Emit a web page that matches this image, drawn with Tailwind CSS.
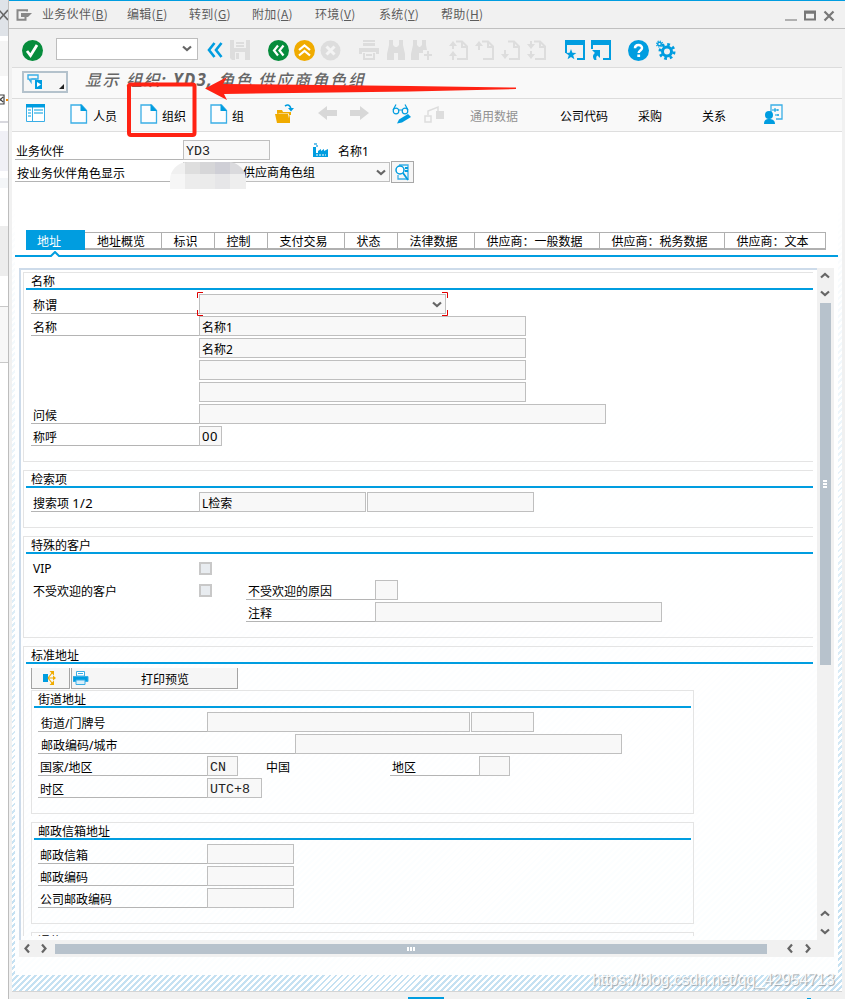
<!DOCTYPE html>
<html lang="zh-CN">
<head>
  <meta charset="UTF-8">
  <meta name="viewport" content="width=device-width, initial-scale=1.0">
  <title>显示 组织: YD3</title>
  <script src="https://cdn.jsdelivr.net/npm/@tailwindcss/browser@4"></script>
  <style>
    body { font-family: 'Noto Sans', 'Noto Sans CJK SC', sans-serif; }
    .cjk { font-family: 'Noto Sans CJK SC', sans-serif; }
    .mono { font-family: 'Liberation Mono', monospace; color: #222; }
    .hatch { background: linear-gradient(#fff 8%, #ffffff00 90%), repeating-linear-gradient(135deg, #c5e1f2 0 2px, #fff 2px 4.25px); }
    .lbl { border-bottom: 1px solid #b4b4b4; height: 20px; line-height: 23px; padding-left: 2px; flex-shrink: 0; }
    .fld { border: 1px solid #bfbfbf; background: #f8f8f8; height: 20px; line-height: 21px; padding-left: 2px; flex-shrink: 0; }
    svg { flex-shrink: 0; }
  </style>
</head>
<body class="relative w-[845px] h-[999px] overflow-hidden flex bg-[#f1f1f1] text-black text-xs whitespace-nowrap">

<svg class="hidden">
  <symbol id="doc" viewBox="0 0 18 20"><path d="M1 1h10.500L16.500 6.500V19H1z" fill="#fcfdfe" stroke="#3aaee6" stroke-width="1.300"/><path d="M10.500 0 17 7h-6.500z" fill="#009de0"/></symbol>
  <symbol id="down" viewBox="0 0 10 7"><path d="M1 1.500 5 5l4-3.500" fill="none" stroke="#666" stroke-width="2.200"/></symbol>
  <symbol id="page" viewBox="0 0 20 20"><path d="M7 1.500h6l5 5V19H8M13 2v5h5" fill="none" stroke="#ddd" stroke-width="2"/></symbol>
</svg>

<!-- window behind -->
<aside class="w-2 shrink-0 h-full overflow-hidden flex flex-col bg-white">
  <div class="h-9 bg-[#dfe3e8] pt-[9px]"><svg width="8" height="12" viewBox="0 0 8 12"><path d="M-1 1 8 11M8 1-1 11" stroke="#666" stroke-width="1.600"/></svg></div>
  <div class="h-[5px] bg-white"></div>
  <div class="h-[35px] bg-[#f5f5f5]"></div>
  <div class="h-[47px] border-b-2 border-[#d8d8de] pt-[17px]"><svg width="8" height="14" viewBox="0 0 8 14"><path d="M-3 2h7v9h-7M-2 4l5 5M3 4l-5 5" fill="none" stroke="#444" stroke-width="1.200"/><path d="M6 7h2" stroke="#f08a00" stroke-width="2"/></svg></div>
  <div class="h-[8px]"></div>
  <div class="h-10 bg-[#f0f0f6]"></div>
  <div class="h-[7px]"></div>
  <div class="h-[10px] bg-[#f4f6f8]"></div>
  <div class="h-[38px]"></div>
  <div class="h-[50px] bg-[#ededed]"></div>
  <div class="h-[30px]"></div>
  <div class="h-[57px] bg-[#f7f7f7] border-y border-[#c8c8c8]"></div>
</aside>

<div class="flex-1 min-w-0 h-full flex flex-col border-l border-[#bdbdbd] border-t-0">
  <div class="h-px bg-[#009de0]"></div>

  <!-- menu bar -->
  <header class="cjk h-7 flex items-center border-b border-[#c0c0c0] text-[#5c5c5c] pl-[7px] shrink-0">
    <svg width="16" height="12" viewBox="0 0 16 12"><path d="M11 2.500V1.200H1.500v9.600h8V8" fill="none" stroke="#888" stroke-width="2"/><path d="M5 4h11l-4 4H5z" fill="#888"/></svg>
    <nav class="flex pl-[10px] pb-[2px] tracking-[.3px]">
      <span class="w-[85px]">业务伙伴(<u>B</u>)</span>
      <span class="w-[62px]">编辑(<u>E</u>)</span>
      <span class="w-[63px]">转到(<u>G</u>)</span>
      <span class="w-[63px]">附加(<u>A</u>)</span>
      <span class="w-16">环境(<u>V</u>)</span>
      <span class="w-[62px]">系统(<u>Y</u>)</span>
      <span>帮助(<u>H</u>)</span>
    </nav>
    <svg class="ml-auto mr-[10px] mt-[2px]" width="50" height="13" viewBox="0 0 50 13"><path d="M0 11h12" stroke="#b0b0b0" stroke-width="2"/><path d="M20 3.500h10v7H20z" fill="none" stroke="#777" stroke-width="2"/><path d="M19 3h12" stroke="#777" stroke-width="3"/><path d="m39.500 2.500 9 9m0-9-9 9" stroke="#777" stroke-width="2.200"/></svg>
  </header>

  <!-- system toolbar -->
  <div class="h-[38px] shrink-0 flex items-center pl-[13px] pt-[7px] pb-[3px]">
    <svg width="21" height="21" viewBox="0 0 21 21"><circle cx="10.500" cy="10.500" r="10.500" fill="#068c3c"/><path d="m5 11 3.500 4.500L15 5" fill="none" stroke="#fff" stroke-width="2.800"/></svg>
    <div class="ml-[13px] mb-[3px] w-[142px] h-[22px] bg-white border border-[#bdbdbd] flex items-center justify-end pr-[5px]"><svg width="10" height="7"><use href="#down"/></svg></div>
    <svg class="ml-[9px]" width="16" height="16" viewBox="0 0 16 16"><path d="M7.500 1 2 8l5.500 7M14.500 1 9 8l5.500 7" fill="none" stroke="#009de0" stroke-width="2.600"/></svg>
    <svg class="ml-[7px]" width="20" height="20" viewBox="0 0 20 20"><path d="M0 0h20v20H2l-2-2z" fill="#ddd"/><path d="M4 0h12v8H4zM5 12h10v8H5z" fill="#f1f1f1"/><path d="M6 2h8v2H6zm0 3h8v2H6zM6 13h3v6H6z" fill="#ddd"/></svg>
    <svg class="ml-[18px]" width="21" height="21" viewBox="0 0 21 21"><circle cx="10.500" cy="10.500" r="10.500" fill="#068c3c"/><path d="m10 5.500-4 5 4 5m5.500-10-4 5 4 5" fill="none" stroke="#fff" stroke-width="2.200"/></svg>
    <svg class="ml-[5px]" width="21" height="21" viewBox="0 0 21 21"><circle cx="10.500" cy="10.500" r="10.500" fill="#f0ab00"/><path d="m5 10 5.500-4.500L16 10M5 15.500l5.500-4.500 5.500 4.500" fill="none" stroke="#fff" stroke-width="2.200"/></svg>
    <svg class="ml-[5px]" width="21" height="21" viewBox="0 0 21 21"><circle cx="10.500" cy="10.500" r="10" fill="#ddd"/><path d="m6.500 6.500 8 8m0-8-8 8" stroke="#f4f4f4" stroke-width="3"/></svg>
    <svg class="ml-[18px]" width="20" height="20" viewBox="0 0 20 20"><path d="M4 0h12v2H4zm0 3h12v3H4zM0 8h20v6h-3v-2H3v2H0zm4 5h2v5h8v-5h2v7H4zm3 1h6v2H7z" fill="#ddd"/></svg>
    <svg class="ml-[7px]" width="20" height="20" viewBox="0 0 20 20"><path d="M3 0h4v5l2 2h2l2-2V0h4v5l2 9v6h-7v-7H8v7H1v-6l2-9z" fill="#ddd"/></svg>
    <svg class="ml-[5px]" width="21" height="20" viewBox="0 0 21 20"><path d="M2 0h4v5l2 2h1l2-2V0h4v5l1 5h-4v3H8v7H0v-6l2-9zM16 11h2v3h3v2h-3v4h-2v-4h-3v-2h3z" fill="#ddd"/></svg>
    <svg class="ml-[17px]" width="20" height="20"><use href="#page"/><path d="M0 6 4 1l4 5H5v3H3V6zM0 16l4-5 4 5H5v4H3v-4z" fill="#ddd"/></svg>
    <svg class="ml-[6px]" width="20" height="20"><use href="#page"/><path d="M0 6 4 1l4 5H5v4H3V6z" fill="#ddd"/></svg>
    <svg class="ml-[6px]" width="20" height="20"><use href="#page"/><path d="m0 14 4 5 4-5H5v-4H3v4z" fill="#ddd"/></svg>
    <svg class="ml-[6px]" width="20" height="20"><use href="#page"/><path d="m0 4 4 5 4-5H5V1H3v3zM0 14l4 5 4-5H5v-3H3v3z" fill="#ddd"/></svg>
    <svg class="ml-[18px]" width="20" height="20" viewBox="0 0 20 20"><path d="M0 0h20v20h-8v-2h6V5H2v8H0z" fill="#009de0"/><path d="m6 9 1.400 3.800 4 .1-3.200 2.400 1.200 4L6 17l-3.400 2.300 1.200-4L.6 12.900l4-.1z" fill="#009de0"/></svg>
    <svg class="ml-[6px]" width="20" height="20" viewBox="0 0 20 20"><path d="M0 0h20v20h-8v-2h6V5H2v4H0z" fill="#009de0"/><path d="M1 10h8v8l-2.500-2.500C5 16 5 18 5.500 20H3.500C1 17 2 14.500 4 13z" fill="#009de0"/></svg>
    <svg class="ml-[17px]" width="21" height="21" viewBox="0 0 21 21"><circle cx="10.500" cy="10.500" r="10.500" fill="#009de0"/><path d="M7 8.300C7 4 14 4 14 8c0 2.500-3.300 2.500-3.300 5" fill="none" stroke="#fff" stroke-width="2.500"/><path d="M9.300 14.500h2.800V17H9.300z" fill="#fff"/></svg>
    <svg class="ml-[7px]" width="21" height="21" viewBox="0 0 21 21" fill="none" stroke="#009de0"><circle cx="11" cy="11.500" r="4.500" stroke-width="3"/><circle cx="11" cy="11.500" r="7" stroke-width="3" stroke-dasharray="2.700 2.798"/><circle cx="3.500" cy="4" r="1.800" stroke-width="1.400"/><circle cx="3.500" cy="4" r="3" stroke-width="1.200" stroke-dasharray="1.150 1.206"/></svg>
  </div>

  <div class="ml-[3px] mr-[3px] h-[925px] shrink-0 flex flex-col border-b border-[#d4d4d4]">
    <!-- title -->
    <div class="h-8 shrink-0 bg-[#f9f9f9] border-y border-[#dcdcdc] flex items-start pl-[10px] pt-[2px]">
      <div class="mt-px w-[46px] h-[22px] border-2 border-[#b4c2cc] bg-[#f6f6f6] flex items-end justify-between pl-[3px] pr-[2px] pb-[2px]">
        <svg width="16" height="15" viewBox="0 0 16 15"><path d="M1 1h10v4H4v3L2 5H1z" fill="none" stroke="#3aaee6" stroke-width="1.400"/><path d="M5 5h4v4" fill="none" stroke="#3aaee6"/><path d="M8 6h7v9H8z" fill="#009de0"/><path d="m10 8 4 2.500-4 2.500z" fill="#fff"/></svg>
        <svg width="5" height="5"><path d="M5 0v5H0z" fill="#222"/></svg>
      </div>
      <h1 class="ml-[17px] -mt-px text-base leading-[22px] font-medium italic text-[#666] flex"><span class="w-[41px] tracking-[1.500px]">显示</span><span class="w-[47px] tracking-[1.500px]">组织<b>:</b></span><b class="w-[45px] text-[17px] tracking-[1.200px]">YD3,</b><span class="w-[40px] tracking-[1.500px]">角色</span><span class="tracking-[2px]">供应商角色组</span></h1>
    </div>

    <!-- application toolbar -->
    <div class="cjk h-8 shrink-0 bg-[#f9f9f9] flex items-center pl-[14px] pb-[2px]">
      <svg class="mb-0.5" width="19" height="18" viewBox="0 0 19 18"><path d="M.5.500h18v17H.5zM6.500 3v14" fill="#fff" stroke="#3aaee6"/><path d="M0 0h19v3.500H0z" fill="#009de0"/><path d="M2 6h3M2 9h3m-3 3h3M8 6h9M8 9h9" stroke="#009de0" stroke-width="1.200"/></svg>
      <svg class="ml-[25px]" width="18" height="20"><use href="#doc"/></svg>
      <span class="ml-[5px] mt-[3px] w-[47px]">人员</span>
      <svg width="18" height="20"><use href="#doc"/></svg>
      <span class="ml-[4px] mt-[3px] w-12">组织</span>
      <svg width="18" height="20"><use href="#doc"/></svg>
      <span class="ml-[4px] mt-[3px] w-[43px]">组</span>
      <svg width="19" height="20" viewBox="0 0 19 20"><path d="M2 9V6h5l1 2h8v3h-2V9.500H3.500v4z" fill="#f0ab00"/><path d="M0 10h13l2 9H2z" fill="#f0ab00"/><path d="M15 9v10h-2z" fill="#f0ab00"/><path d="M10 2c3-2 5-1 6 3" fill="none" stroke="#009de0" stroke-width="1.600"/><path d="M13 4h6l-3 3.500z" fill="#009de0"/></svg>
      <svg class="ml-[24px] mb-0.5" width="19" height="16" viewBox="0 0 19 16"><path d="M0 8 9 1v4h10v6H9v4z" fill="#d8d8d8"/></svg>
      <svg class="ml-[13px] mb-0.5" width="19" height="16" viewBox="0 0 19 16"><path d="m19 8-9-7v4H0v6h10v4z" fill="#d8d8d8"/></svg>
      <svg class="ml-[23px]" width="20" height="20" viewBox="0 0 20 20"><path d="m1 6 3-5.500M13 .5 16 6M7 6h4" stroke="#009de0" stroke-width="1.200"/><circle cx="4" cy="7" r="2.800" fill="none" stroke="#009de0" stroke-width="1.200"/><circle cx="13" cy="7" r="2.800" fill="none" stroke="#009de0" stroke-width="1.200"/><path d="m16 10 3 3-9 5.500-5 1 2-4z" fill="#009de0"/></svg>
      <svg class="ml-[12px]" width="20" height="18" viewBox="0 0 20 18"><path d="M1 11h6v6H1zM4 10V6l10-4v4" fill="none" stroke="#ddd" stroke-width="1.500"/><path d="M12 6h8v8h-8z" fill="#ddd"/></svg>
      <span class="ml-[26px] mt-[3px] w-[90px] text-[#919191]">通用数据</span>
      <span class="mt-[3px] w-[78px]">公司代码</span>
      <span class="mt-[3px] w-16">采购</span>
      <span class="mt-[3px] w-[62px]">关系</span>
      <svg width="19" height="20" viewBox="0 0 19 20"><path d="M7 8V1h11v14h-6" fill="none" stroke="#3aaee6" stroke-width="1.300"/><path d="M8 6h6m-3-2v4M14 5v2m0 3v2m-3-1h4" stroke="#009de0"/><circle cx="5" cy="11" r="4" fill="#009de0"/><path d="M0 20c0-4 2-5 5-5s6 1 6 5z" fill="#009de0"/></svg>
    </div>

    <!-- content -->
    <main class="hatch flex-1 min-h-0 border-t border-[#dedede] pl-[3px] pr-1 pb-4">
      <div class="h-[843px] bg-white/95 flex flex-col">
        <div class="flex mt-[8px] h-5 shrink-0">
          <div class="lbl w-[168px] -indent-px">业务伙伴</div>
          <div class="fld mono w-[87px] text-[13.3px]">YD3</div>
          <svg class="ml-[43px] mt-[3px]" width="16" height="15" viewBox="0 0 16 15"><path d="M0 14V4h3v6h2V8l3-2v2l3-2v2l4-2v8z" fill="#009de0"/><path d="M1 1h3M3 3h2" stroke="#3aaee6" stroke-width="1.500"/><path d="M3 12h10" stroke="#fff" stroke-dasharray="2 1"/></svg>
          <span class="ml-[9px] leading-[23px]">名称1</span>
        </div>
        <div class="flex mt-[1px] h-[22px] relative">
          <div class="lbl mt-px w-[168px]">按业务伙伴角色显示</div>
          <div class="fld mt-px w-[207px] flex justify-between items-center bg-white"><span class="pl-[57px] pt-px leading-[18px]">供应商角色组</span><svg class="mr-[3px]" width="10" height="7"><use href="#down"/></svg></div>
          <div class="ml-px w-[23px] h-[22px] border border-[#a8a8a8] bg-[#f6f6f6] pl-[3px] pt-[2px]"><svg width="15" height="17" viewBox="0 0 15 17"><path d="M4 1h9v14H3v-4" fill="none" stroke="#3aaee6" stroke-width="1.300"/><circle cx="5" cy="6" r="4" fill="#fff" stroke="#009de0" stroke-width="1.500"/><path d="m8 9 5 7M10 4h3m-3 3h3" stroke="#009de0" stroke-width="1.800"/></svg></div>
          <!-- masked text -->
          <div class="absolute left-[155px] top-[1px] w-[76px] h-[27px] rounded-t-[18px] overflow-hidden grid grid-cols-[15px_15px_15px_15px_16px] grid-rows-[12px_15px]">
            <i class="bg-[#f0f0f0]"></i><i class="bg-[#dedede]"></i><i class="bg-[#d6d6d8]"></i><i class="bg-[#cfcfd6]"></i><i class="bg-[#dadadd]"></i>
            <i class="bg-[#f6f6f6]"></i><i class="bg-[#ececec]"></i><i class="bg-[#ebebeb]"></i><i class="bg-[#e6e6e8]"></i><i class="bg-[#eeeeee]"></i>
          </div>
        </div>

        <!-- tabs -->
        <div class="relative mt-[47px] h-[27px] flex items-end pl-[11px] pb-[5px] border-b-2 border-[#009de0] leading-[17px] text-center shrink-0">
          <div class="w-[59px] h-5 bg-[#009de0] text-white pr-[13px] pt-[3px]">地址</div>
          <div class="w-[77px] h-[18px] border-t border-b-2 border-r border-[#b0b0b0] pr-1">地址概览</div>
          <div class="w-[53px] h-[18px] border-t border-b-2 border-r border-[#b0b0b0] pr-[5px]">标识</div>
          <div class="w-[53px] h-[18px] border-t border-b-2 border-r border-[#b0b0b0] pr-[5px]">控制</div>
          <div class="w-[77px] h-[18px] border-t border-b-2 border-r border-[#b0b0b0] pr-[5px]">支付交易</div>
          <div class="w-[53px] h-[18px] border-t border-b-2 border-r border-[#b0b0b0] pr-[5px]">状态</div>
          <div class="w-[77px] h-[18px] border-t border-b-2 border-r border-[#b0b0b0] pr-[5px]">法律数据</div>
          <div class="w-[125px] h-[18px] border-t border-b-2 border-r border-[#b0b0b0] pr-[5px]">供应商：一般数据</div>
          <div class="w-[125px] h-[18px] border-t border-b-2 border-r border-[#b0b0b0] pr-[5px]">供应商：税务数据</div>
          <div class="w-[101px] h-[18px] border-t border-b-2 border-r border-[#b0b0b0] pr-[5px]">供应商：文本</div>
          <svg class="absolute left-[35px] top-[21px]" width="10" height="6"><path d="M0 6 5 1l5 5" fill="#fff" stroke="#009de0" stroke-width="2"/></svg>
        </div>

        <div class="mt-[11px] ml-1 h-[690px] shrink-0 flex flex-col w-[815px]">
          <div class="flex h-[672px]">
            <!-- scroll area -->
            <section class="w-[798px] h-[672px] border-l-2 border-t-2 border-[#cddbea] pl-[2px] pt-[2px]">
              <div class="h-[664px] overflow-hidden flex flex-col gap-2 w-[790px]">
                <fieldset class="h-[190px] shrink-0 border border-r-0 border-[#e4e4e4] pl-[2px]">
                  <h2 class="h-[17px] leading-[18px] pl-[5px] border-b-2 border-[#009de0]">名称</h2>
                  <div class="pl-[5px] pt-1 flex flex-col gap-[2px]">
                    <div class="flex"><div class="lbl w-[168px]">称谓</div><div class="fld relative w-[247px] flex items-center justify-end pr-[3px]"><svg width="10" height="7"><use href="#down"/></svg>
                      <svg class="absolute -left-[3px] -top-[3px]" width="251" height="24" fill="none" stroke="#e00000"><path d="M.5 6V.5H6M245 .5h5.500V6M.5 18v5.500H6M245 23.500h5.500V18"/></svg></div></div>
                    <div class="flex"><div class="lbl w-[168px]">名称</div><div class="fld w-[327px] leading-[22px]">名称1</div></div>
                    <div class="fld ml-[168px] w-[327px]">名称2</div>
                    <div class="fld ml-[168px] w-[327px]"></div>
                    <div class="fld ml-[168px] w-[327px]"></div>
                    <div class="flex"><div class="lbl w-[168px]">问候</div><div class="fld w-[407px]"></div></div>
                    <div class="flex"><div class="lbl w-[168px]">称呼</div><div class="fld w-[23px] pl-[3px] text-[13px] tracking-[.5px]"><span class="block -mt-px">00</span></div></div>
                  </div>
                </fieldset>

                <fieldset class="h-[58px] shrink-0 border border-r-0 border-[#e4e4e4] pl-[2px]">
                  <h2 class="h-[17px] leading-[18px] pl-[5px] border-b-2 border-[#009de0]">检索项</h2>
                  <div class="pl-[5px] pt-1 flex"><div class="lbl w-[168px]">搜索项 <span class="text-[13px] tracking-[.4px]">1/2</span></div><div class="fld w-[167px]">L检索</div><div class="fld ml-px w-[167px]"></div></div>
                </fieldset>

                <fieldset class="h-[102px] shrink-0 border border-r-0 border-[#e4e4e4] pl-[2px]">
                  <h2 class="h-[17px] leading-[18px] pl-[5px] border-b-2 border-[#009de0]">特殊的客户</h2>
                  <div class="pl-[7px] pt-1 flex flex-col gap-[2px] leading-[21px]">
                    <div class="flex items-center h-5"><span class="w-[166px]">VIP</span><i class="w-[13px] h-[13px] border-2 border-[#c8c8c8] bg-[#e8ecf0]"></i></div>
                    <div class="flex items-center h-5"><span class="w-[166px] pt-[2px]">不受欢迎的客户</span><i class="w-[13px] h-[13px] border-2 border-[#c8c8c8] bg-[#e8ecf0] mr-[34px]"></i><div class="lbl w-[129px]">不受欢迎的原因</div><div class="fld w-[23px]"></div></div>
                    <div class="flex pl-[213px]"><div class="lbl w-[129px]">注释</div><div class="fld w-[287px]"></div></div>
                  </div>
                </fieldset>

                <fieldset class="h-[400px] shrink-0 border border-r-0 border-[#e4e4e4] pl-[2px]">
                  <h2 class="h-[17px] leading-[18px] pl-[5px] border-b-2 border-[#009de0]">标准地址</h2>
                  <div class="pl-[5px] pt-1 flex h-[25px] gap-px">
                    <button class="w-[39px] h-[21px] bg-[#f6f6f6] border-l border-r border-b border-[#a4a4a4] pl-[11px]"><svg width="14" height="16" viewBox="0 0 14 16"><path d="M0 4h5v8H0z" fill="#009de0"/><path d="M5 8h6M5 8l4-5M5 8l4 5" stroke="#f0ab00" stroke-width="1.200"/><path d="M6.500 1H11v4.500zM6.500 15H11v-4.500zM10 5.500 13 8l-3 2.500z" fill="#f0ab00"/></svg></button>
                    <button class="w-[167px] h-[21px] bg-[#f6f6f6] border-l border-r border-b border-[#a4a4a4] pl-px flex items-center"><svg width="16" height="14" viewBox="0 0 16 14"><path d="M3.500 5V.500h8V5z" fill="#fff" stroke="#3aaee6"/><path d="M5 2.500h5M0 5.500h15v5H0z" fill="#009de0" stroke="#3aaee6"/><path d="M3 9h9v4.500H3z" fill="#d9effa" stroke="#3aaee6"/></svg><span class="pl-[52px] pt-1">打印预览</span></button>
                  </div>
                  <div class="ml-[5px] mt-px w-[663px] flex flex-col gap-2">
                    <div class="h-[124px] border border-[#e4e4e4] pl-[2px] pr-[2px]">
                      <h3 class="h-[17px] leading-[18px] pl-1 border-b-2 border-[#009de0]">街道地址</h3>
                      <div class="pl-1 pt-1 flex flex-col gap-[2px]">
                        <div class="flex"><div class="lbl w-[169px] indent-px">街道/门牌号</div><div class="fld w-[263px]"></div><div class="fld ml-px w-[63px]"></div></div>
                        <div class="flex"><div class="lbl w-[257px] indent-px">邮政编码/城市</div><div class="fld w-[327px]"></div></div>
                        <div class="flex h-5"><div class="lbl w-[169px]">国家/地区</div><div class="fld mono w-[31px] text-[13.3px]">CN</div><span class="ml-[28px] w-[124px] leading-[23px]">中国</span><div class="lbl w-[89px]">地区</div><div class="fld w-[31px]"></div></div>
                        <div class="flex"><div class="lbl w-[169px]">时区</div><div class="fld mono w-[55px] text-[13.3px]">UTC+8</div></div>
                      </div>
                    </div>
                    <div class="h-[102px] border border-[#e4e4e4] pl-[2px] pr-[2px]">
                      <h3 class="h-[17px] leading-[18px] pl-1 border-b-2 border-[#009de0]">邮政信箱地址</h3>
                      <div class="pl-1 pt-1 flex flex-col gap-[2px]">
                        <div class="flex"><div class="lbl w-[169px]">邮政信箱</div><div class="fld w-[87px]"></div></div>
                        <div class="flex"><div class="lbl w-[169px]">邮政编码</div><div class="fld w-[87px]"></div></div>
                        <div class="flex"><div class="lbl w-[169px]">公司邮政编码</div><div class="fld w-[87px]"></div></div>
                      </div>
                    </div>
                    <div class="h-[60px] border border-[#e4e4e4] pl-[6px] leading-[18px]">通信</div>
                  </div>
                </fieldset>
              </div>
            </section>
            <!-- vertical scrollbar -->
            <div class="w-[17px] bg-[#f1f1f1] flex flex-col items-center pt-[4px] pb-[5px] pr-px">
              <svg class="rotate-180" width="10" height="7"><use href="#down"/></svg>
              <svg class="mt-[11px]" width="10" height="7"><use href="#down"/></svg>
              <div class="mt-[6px] w-[11px] h-[362px] shrink-0 bg-[#b7c2cc] flex flex-col items-center justify-center gap-px"><i class="w-1 h-[2px] bg-white"></i><i class="w-1 h-[2px] bg-white"></i><i class="w-1 h-[2px] bg-white"></i></div>
              <svg class="mt-auto rotate-180" width="10" height="7"><use href="#down"/></svg>
              <svg class="mt-[11px]" width="10" height="7"><use href="#down"/></svg>
            </div>
          </div>
          <!-- horizontal scrollbar -->
          <div class="h-[17px] bg-[#f1f1f1] flex items-center pl-[3px] pr-[21px]">
            <svg class="rotate-90" width="10" height="7"><use href="#down"/></svg>
            <svg class="ml-[7px] -rotate-90" width="10" height="7"><use href="#down"/></svg>
            <div class="ml-[6px] w-[712px] h-[10px] bg-[#b7c2cc] flex items-center justify-center gap-px"><i class="w-[2px] h-1 bg-white"></i><i class="w-[2px] h-1 bg-white"></i><i class="w-[2px] h-1 bg-white"></i></div>
            <svg class="ml-auto rotate-90" width="10" height="7"><use href="#down"/></svg>
            <svg class="ml-[8px] -rotate-90" width="10" height="7"><use href="#down"/></svg>
          </div>
        </div>
      </div>
    </main>
  </div>
  <div class="flex-1 flex items-end"><div class="ml-[399px] w-9 h-[2px] bg-[#009de0]"></div><div class="ml-[363px] w-1 h-px bg-[#009de0]"></div></div>
</div>

<!-- annotation -->
<svg class="absolute left-0 top-0" width="845" height="140" viewBox="0 0 845 140">
  <rect x="129" y="84.500" width="65.500" height="50.500" rx="2" fill="none" stroke="#ff2213" stroke-width="4"/>
  <path d="M205 88.500 227 77l-4 7 187 2 106 1.500v1.500l-106 2.500-186 2.500 3 6z" fill="#ff2213"/>
</svg>
<div class="absolute left-[592px] top-[971px] text-[15.800px] leading-[18px] text-white/90 [text-shadow:1px_1px_1px_#99a3aa]" style="font-family:'Liberation Sans',sans-serif">https://blog.csdn.net/qq_42954713</div>
</body>
</html>
